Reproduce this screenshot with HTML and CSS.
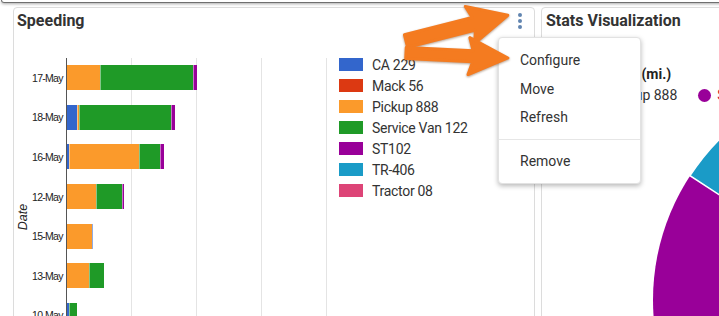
FILE: index.html
```html
<!DOCTYPE html>
<html lang="en">
<head>
<meta charset="utf-8">
<title>Dashboard</title>
<link rel="stylesheet" href="styles.css">
</head>
<body>
<div class="topbar"></div>
<div class="dash">
  <section class="panel panel-speed">
    <header class="panel-head">
      <h2>Speeding</h2>
      <span class="kebab"><i></i><i></i><i></i></span>
    </header>
    <div class="chart">
      <div class="ytitle"><span>Date</span></div>
      <div class="labels">
        <div>17-May</div><div>18-May</div><div>16-May</div><div>12-May</div>
        <div>15-May</div><div>13-May</div><div>10-May</div><div>11-May</div>
      </div>
      <div class="plot">
        <div class="row"><span class="seg o" style="width:33px"></span><span class="seg g" style="width:93px"></span><span class="seg p" style="width:4px"></span></div>
        <div class="row"><span class="seg b" style="width:10px"></span><span class="seg o" style="width:2px"></span><span class="seg g" style="width:92px"></span><span class="seg p" style="width:4px"></span></div>
        <div class="row"><span class="seg b" style="width:2px"></span><span class="seg o" style="width:70px"></span><span class="seg g" style="width:21px"></span><span class="seg p" style="width:4px"></span></div>
        <div class="row"><span class="seg o" style="width:29px"></span><span class="seg g" style="width:26px"></span><span class="seg p" style="width:2px"></span></div>
        <div class="row"><span class="seg o" style="width:25px"></span><span class="seg b" style="width:1px"></span></div>
        <div class="row"><span class="seg o" style="width:22px"></span><span class="seg g" style="width:15px"></span></div>
        <div class="row"><span class="seg b" style="width:2px"></span><span class="seg g" style="width:8px"></span></div>
        <div class="row"><span class="seg o" style="width:18px"></span></div>
      </div>
      <ul class="legend">
        <li><span class="sw b"></span>CA 229</li>
        <li><span class="sw r"></span>Mack 56</li>
        <li><span class="sw o"></span>Pickup 888</li>
        <li><span class="sw g"></span>Service Van 122</li>
        <li><span class="sw p"></span>ST102</li>
        <li><span class="sw t"></span>TR-406</li>
        <li><span class="sw k"></span>Tractor 08</li>
      </ul>
    </div>
  </section>
  <section class="panel panel-stats">
    <header class="panel-head">
      <h2>Stats Visualization</h2>
    </header>
    <div class="pie-legend">
      <div class="pie-title">Distance (mi.)</div>
      <div class="pie-items">
        <span class="dot o"></span><span class="pie-label">Pickup 888</span>
        <span class="dot p"></span><span class="pie-label st">ST102</span>
      </div>
    </div>
    <svg class="pie" width="420" height="230" viewBox="0 0 420 230">
      <circle cx="338" cy="194" r="227" fill="#990099"/>
      <path d="M338,194 L148,69.7 A227,227 0 0 1 377.4,-29.5 Z" fill="#1a9bc7" stroke="#ffffff" stroke-width="1.5"/>
    </svg>
  </section>
</div>

<div class="menu">
  <div class="menu-item">Configure</div>
  <div class="menu-item">Move</div>
  <div class="menu-item">Refresh</div>
  <div class="menu-sep"></div>
  <div class="menu-item">Remove</div>
</div>

<svg class="arrows" width="719" height="316" viewBox="0 0 719 316">
  <g transform="translate(406,41) rotate(-14.2)">
    <polygon points="0,-6.5 70,-6.5 66,-19 105,0 66,19 70,6.5 0,6.5" />
  </g>
  <g transform="translate(406,53) rotate(2.8)">
    <polygon points="0,-5.5 67,-5.5 63,-18.5 102,0 63,18.5 67,5.5 0,5.5" />
  </g>
</svg>
</body>
</html>
```

FILE: styles.css
```css
html, body {
  margin: 0;
  padding: 0;
  overflow: hidden;
  background: #ffffff;
  width: 719px;
  height: 316px;
}
body {
  position: relative;
  font-family: Roboto, "Liberation Sans", sans-serif;
  color: #333333;
}
.topbar {
  height: 2px;
  margin-left: 1px;
  width: 760px;
  border: 1px solid #6f6f6f;
  border-top: none;
  border-radius: 0 0 0 4px;
  box-shadow: 0 1px 3px rgba(0, 0, 0, 0.35);
}
.dash {
  display: flex;
  gap: 6px;
  padding-left: 13px;
  margin-top: 4px;
  width: 1100px;
}
.panel {
  flex: 0 0 522px;
  box-sizing: border-box;
  height: 380px;
  border: 1px solid #dcdcdc;
  border-radius: 4px;
  overflow: hidden;
  background: #fff;
}
.panel-head {
  height: 26px;
  display: flex;
  align-items: center;
  justify-content: space-between;
  padding: 0 12px 0 3px;
}
.panel-stats .panel-head {
  padding-left: 4px;
}
.panel-head h2 {
  margin: 0;
  font-size: 16px;
  font-weight: 700;
  color: #333;
  line-height: 26px;
}
.kebab {
  display: flex;
  flex-direction: column;
  gap: 2px;
  margin-top: 0;
}
.kebab i {
  display: block;
  width: 4px;
  height: 4px;
  border-radius: 50%;
  background: #6185b0;
}

/* bar chart */
.chart {
  display: flex;
  align-items: flex-start;
  padding-top: 20px;
}
.ytitle {
  width: 18px;
  height: 317px;
  margin-top: 4px;
  display: flex;
  align-items: center;
  justify-content: center;
}
.ytitle span {
  display: block;
  transform: rotate(-90deg);
  font-family: "Liberation Sans", Arial, sans-serif;
  font-style: italic;
  font-size: 12.5px;
  color: #222;
  white-space: nowrap;
}
.labels {
  width: 34px;
  margin-top: 4px;
  box-sizing: border-box;
  padding-right: 4px;
  display: grid;
  grid-auto-rows: 39.6px;
  font-family: "Liberation Sans", Arial, sans-serif;
  font-size: 10.5px;
  letter-spacing: -0.7px;
  color: #222;
  text-align: right;
}
.labels div {
  display: flex;
  align-items: center;
  justify-content: flex-end;
  white-space: nowrap;
}
.plot {
  width: 260px;
  margin-top: 4px;
  border-left: 1px solid #555;
  display: grid;
  grid-auto-rows: 39.6px;
  align-items: center;
  background-image: repeating-linear-gradient(to right, transparent 0 64px, #e4e4e4 64px 65px);
}
.row {
  display: flex;
  height: 25px;
}
.seg { display: block; height: 100%; }
.seg + .seg { box-shadow: inset 1px 0 0 rgba(255, 255, 255, 0.45); }
.b { background: #3366cc; }
.r { background: #dc3912; }
.o { background: #fb9a2b; }
.g { background: #1f9a27; }
.p { background: #990099; }
.t { background: #1a9bc7; }
.k { background: #dd4477; }

.legend {
  list-style: none;
  margin: 0 0 0 12px;
  padding: 0;
  font-size: 14px;
  letter-spacing: -0.3px;
  color: #333;
}
.legend li {
  display: flex;
  align-items: center;
  height: 21px;
  white-space: nowrap;
}
.sw {
  display: block;
  width: 24px;
  height: 13px;
  margin-right: 9px;
}

/* pie */
.pie-legend {
  padding: 30px 0 0 41px;
  white-space: nowrap;
}
.pie-title {
  font-size: 14px;
  font-weight: 700;
  line-height: 20px;
  color: #222;
}
.pie-items {
  display: flex;
  align-items: center;
  height: 22px;
  font-size: 14px;
  color: #333;
  margin-left: 6px;
}
.dot {
  display: block;
  width: 13px;
  height: 13px;
  border-radius: 50%;
  margin-right: 6px;
}
.pie-label { margin-right: 21px; }
.pie-label.st { color: #c8102e; }
.pie {
  display: block;
}

/* menu overlay */
.menu {
  position: absolute;
  left: 498px;
  top: 37px;
  width: 143px;
  box-sizing: border-box;
  padding: 8px 0;
  background: #fff;
  border: 1px solid #e2e2e2;
  border-radius: 4px;
  box-shadow: 0 2px 5px rgba(0, 0, 0, 0.28);
  font-size: 14px;
  color: #333;
}
.menu-item {
  height: 28.5px;
  line-height: 28.5px;
  padding-left: 21px;
}
.menu-sep {
  height: 1px;
  background: #e6e6e6;
  margin: 7px 0;
}

.arrows {
  position: absolute;
  left: 0;
  top: 0;
  pointer-events: none;
  filter: drop-shadow(0 1px 1px rgba(90, 40, 0, 0.45));
}
.arrows polygon {
  fill: #f47b20;
  stroke: #f47b20;
  stroke-width: 3;
  stroke-linejoin: round;
}
```
